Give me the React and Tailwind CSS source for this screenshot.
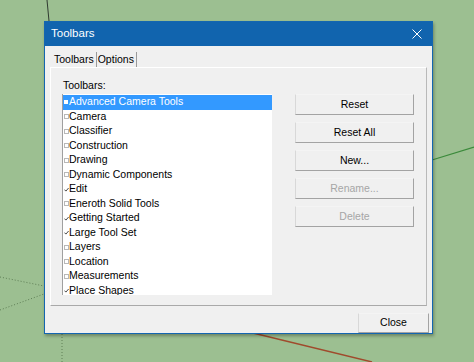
import React from 'react';

const items = [
  { name: 'Advanced Camera Tools', checked: false, selected: true },
  { name: 'Camera', checked: false },
  { name: 'Classifier', checked: false },
  { name: 'Construction', checked: false },
  { name: 'Drawing', checked: false },
  { name: 'Dynamic Components', checked: false },
  { name: 'Edit', checked: true },
  { name: 'Eneroth Solid Tools', checked: false },
  { name: 'Getting Started', checked: true },
  { name: 'Large Tool Set', checked: true },
  { name: 'Layers', checked: false },
  { name: 'Location', checked: false },
  { name: 'Measurements', checked: false },
  { name: 'Place Shapes', checked: true },
];

const buttons = [
  { label: 'Reset', disabled: false },
  { label: 'Reset All', disabled: false },
  { label: 'New...', disabled: false },
  { label: 'Rename...', disabled: true },
  { label: 'Delete', disabled: true },
];

// tiny listbox checkbox glyph
const Box = ({ checked, selected }) => {
  if (selected) return <span className="w-[4px] h-[4px] bg-white ml-[1px] mr-[1px] shrink-0" />;
  if (checked)
    return (
      <svg width="5" height="5" viewBox="0 0 5 5" className="shrink-0 ml-[0.5px] mr-[0.5px]">
        <path d="M0.4 2.6 L1.9 4.1 L4.6 1" fill="none" stroke="#333" strokeWidth="0.9" />
      </svg>
    );
  return <span className="w-[5px] h-[5px] border border-[#b8b8b8] bg-white ml-[0.5px] mr-[0.5px] shrink-0" />;
};

const WinButton = ({ label, disabled, className = '' }) => (
  <div
    className={`flex items-center justify-center bg-[#f0f0f0] border border-t-[#f4f4f4] border-l-[#d8d8d8] border-r-[#a3a3a3] border-b-[#a3a3a3] text-[10.5px] ${
      disabled ? 'text-[#a6a6a6]' : 'text-black'
    } ${className}`}
  >
    {label}
  </div>
);

export default function App() {
  return (
    <div className="relative w-[474px] h-[362px] overflow-hidden bg-[#9cbf91] pt-[21px] pl-[44px] font-['Liberation_Sans',Arial,sans-serif]">
      {/* scene lines behind the dialog */}
      <svg className="absolute inset-0" width="474" height="362" viewBox="0 0 474 362">
        <line x1="47" y1="0" x2="49" y2="21" stroke="#2f3a30" strokeWidth="1" />
        <line x1="432" y1="160" x2="474" y2="147" stroke="#3b8a3b" strokeWidth="1.2" />
        <line x1="253" y1="333" x2="372" y2="362" stroke="#a04a2c" strokeWidth="1.4" />
        <line x1="0" y1="277" x2="44" y2="286" stroke="#5e7e55" strokeWidth="1" strokeDasharray="1 2" />
        <line x1="0" y1="310" x2="44" y2="294" stroke="#5e7e55" strokeWidth="1" strokeDasharray="1 2" />
        <line x1="62" y1="334" x2="62" y2="362" stroke="#5e7e55" strokeWidth="1" strokeDasharray="1 2" />
      </svg>

      {/* dialog */}
      <div className="relative w-[389px] h-[313px] bg-[#f0f0f0] border border-[#1466b0] shadow-[1px_2px_3px_rgba(0,0,0,0.3)] flex flex-col">
        <div className="h-[24px] bg-[#1164ae] flex items-center justify-between pl-[6px] pr-[10px] text-white text-[11.5px]">
          <span>Toolbars</span>
          <svg width="10" height="10" viewBox="0 0 10 10">
            <path d="M0.5 0.5 L9.5 9.5 M9.5 0.5 L0.5 9.5" stroke="#fff" strokeWidth="1" />
          </svg>
        </div>

        <div className="px-[5px] pt-[6px]">
          {/* tabs */}
          <div className="h-[15px] flex items-center pl-[4px] text-[10.5px] text-black">
            <span className="pr-[2px] border-r border-[#9a9a9a] h-[15px] leading-[15px]">Toolbars</span>
            <span className="pl-[1px] pr-[2px] border-r border-[#9a9a9a] h-[15px] leading-[15px]">Options</span>
          </div>

          {/* tab panel */}
          <div className="h-[239px] border border-t-white border-l-white border-r-[#b9b9b9] border-b-[#a9a9a9] pl-[11px] pt-[10px]">
            <div className="h-[15px] leading-[15px] pl-[1px] text-[10.5px] text-black">Toolbars:</div>
            <div className="flex mt-[1px]">
              <div className="w-[210px] h-[201px] bg-white border-l border-[#a0a0a0] pt-[1px] overflow-hidden">
                {items.map((it) => (
                  <div
                    key={it.name}
                    className={`h-[14.5px] flex items-center text-[10.5px] whitespace-nowrap ${
                      it.selected ? 'bg-[#3399ff] text-white' : 'text-black'
                    }`}
                  >
                    <Box checked={it.checked} selected={it.selected} />
                    <span>{it.name}</span>
                  </div>
                ))}
              </div>
              <div className="ml-[23px] w-[119px] flex flex-col gap-[7px]">
                {buttons.map((b) => (
                  <WinButton key={b.label} label={b.label} disabled={b.disabled} className="h-[21px]" />
                ))}
              </div>
            </div>
          </div>
        </div>

        <div className="flex justify-end pr-[3px] mt-[7px]">
          <WinButton label="Close" className="w-[71px] h-[20px] border-l-[#b0b0b0] border-t-[#d0d0d0]" />
        </div>
      </div>
    </div>
  );
}
